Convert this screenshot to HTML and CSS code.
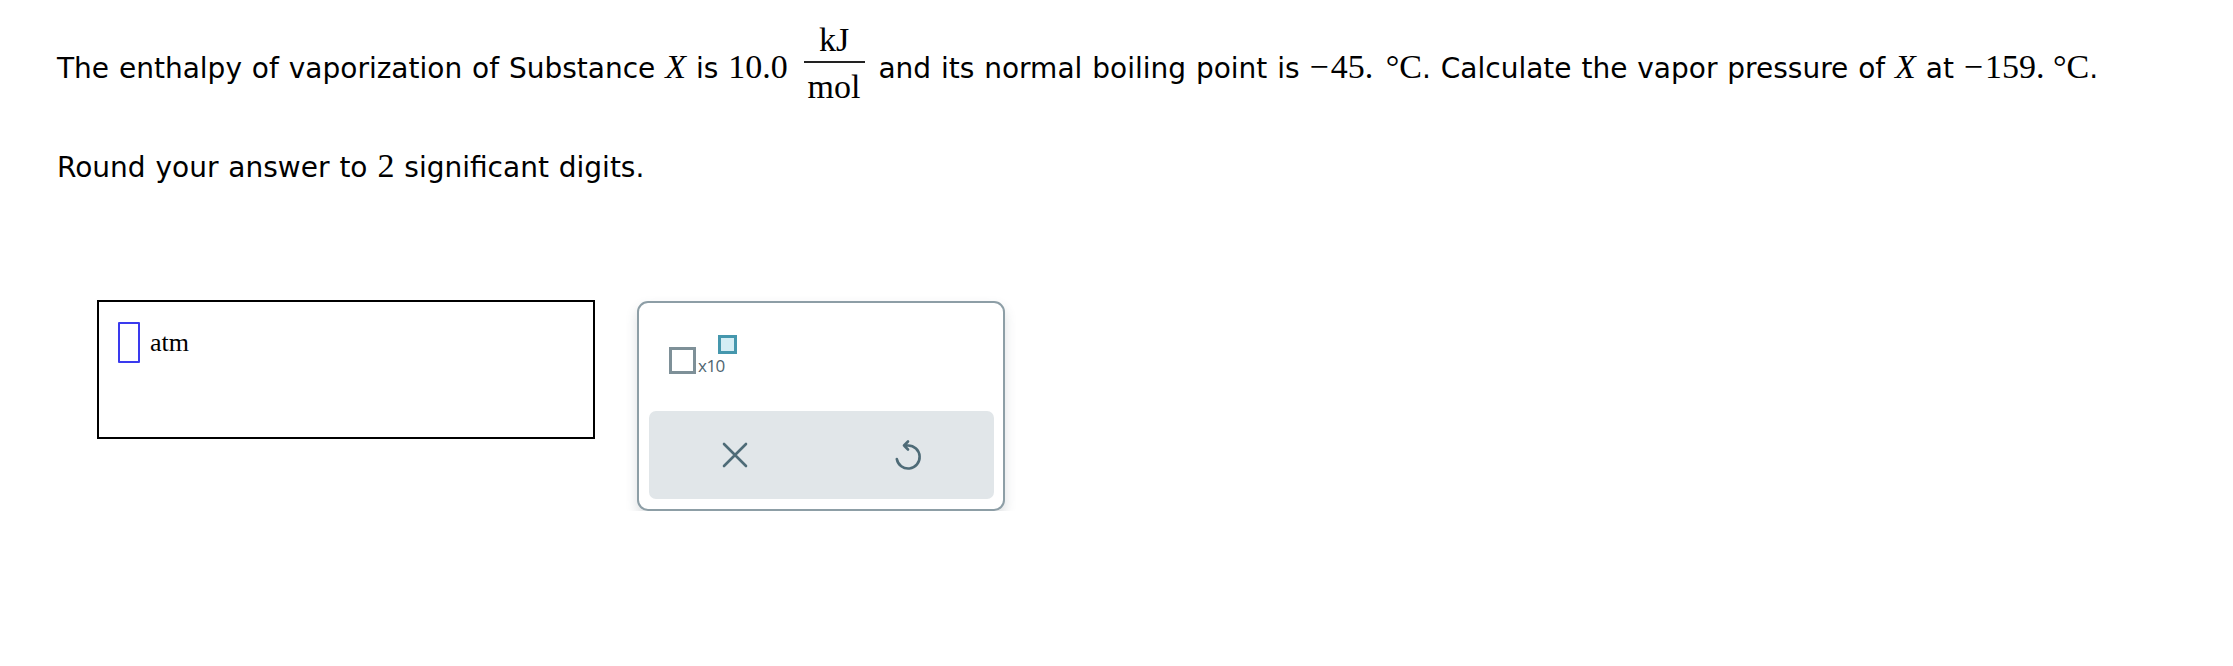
FILE: index.html
```html
<!DOCTYPE html>
<html>
<head>
<meta charset="utf-8">
<link rel="stylesheet" href="styles.css">
</head>
<body>
<div class="page">
  <p class="q1">The enthalpy of vaporization of Substance <span class="m mi">X</span> is <span class="m">10.0</span> <span class="frac"><span class="num">kJ</span><span class="den">mol</span></span> and its normal boiling point is <span class="m"><span class="minus">−</span>45. <span class="unit-c wide">°C</span></span>. Calculate the vapor pressure of <span class="m mi">X</span> at <span class="m"><span class="minus">−</span>159. <span class="unit-c">°C</span></span>.</p>
  <p class="q2">Round your answer to <span class="m">2</span> significant digits.</p>
  <div class="answer-row">
    <div class="answer-box">
      <span class="slot"></span>
      <span class="unit">atm</span>
    </div>
    <div class="palette">
      <div class="palette-top">
        <div class="sci">
          <span class="sci-base"></span>
          <span class="sci-x">x10</span>
          <span class="sci-exp"></span>
        </div>
      </div>
      <div class="palette-actions">
        <div class="action">
          <svg width="26" height="26" viewBox="0 0 26 26"><path d="M2 2 L24 24 M24 2 L2 24" stroke="#4e6b77" stroke-width="2.6" fill="none" stroke-linecap="round"/></svg>
        </div>
        <div class="action">
          <svg width="30" height="32" viewBox="0 0 30 32"><path d="M3.8 20 A11.5 11.5 0 1 0 15 6.5 L11 6.5 M15 2.5 L11 6.5 L15 10.5" stroke="#4e6b77" stroke-width="2.6" fill="none" stroke-linecap="round" stroke-linejoin="round"/></svg>
        </div>
      </div>
    </div>
  </div>
</div>
</body>
</html>
```
FILE: styles.css
```css
html, body {
  margin: 0;
  padding: 0;
  background: #ffffff;
}
.page {
  padding: 0 0 0 57px;
  font-family: "DejaVu Sans", Verdana, sans-serif;
  font-size: 28px;
  word-spacing: 1px;
  color: #000;
}
.q1 {
  margin: 0;
  padding-top: 22px;
  line-height: 40px;
  white-space: nowrap;
}
.m {
  font-family: "Liberation Serif", "Times New Roman", serif;
  font-size: 34px;
  word-spacing: 0;
}
.mi {
  font-style: italic;
}
.minus {
  margin-right: 2px;
}
.unit-c.wide {
  margin-left: 4px;
}
.frac {
  display: inline-flex;
  flex-direction: column;
  align-items: stretch;
  vertical-align: 26.5px;
  font-family: "Liberation Serif", "Times New Roman", serif;
  font-size: 34px;
  line-height: 36px;
  margin: 0 4px 0 6px;
  text-align: center;
}
.num {
  padding: 0 4px 3px;
}
.den {
  border-top: 2px solid #222;
  padding: 6px 4px 0;
}
.q2 {
  margin: 0;
  padding-top: 41px;
  line-height: 40px;
}
.answer-row {
  display: flex;
  align-items: flex-start;
  margin-top: 112px;
  margin-left: 40px;
  gap: 42px;
}
.answer-box {
  box-sizing: border-box;
  width: 498px;
  height: 139px;
  border: 2px solid #000;
  padding: 20px 0 0 19px;
  display: flex;
  align-items: flex-start;
}
.slot {
  box-sizing: border-box;
  width: 22px;
  height: 41px;
  border: 2px solid #3a3aee;
  border-radius: 1px;
}
.unit {
  font-family: "Liberation Serif", "Times New Roman", serif;
  font-size: 26px;
  margin-left: 10px;
  line-height: 30px;
  padding-top: 6px;
}
.palette {
  box-sizing: border-box;
  width: 368px;
  height: 210px;
  margin-top: 1px;
  border: 2px solid #8d9ea6;
  border-radius: 11px;
  background: #fff;
  box-shadow: 0 6px 12px rgba(60, 80, 90, 0.18);
  padding: 0 9px 10px 10px;
  display: flex;
  flex-direction: column;
}
.palette-top {
  height: 108px;
  box-sizing: border-box;
  padding: 32px 0 0 20px;
}
.sci {
  display: flex;
  align-items: flex-start;
  height: 39px;
}
.sci-base {
  box-sizing: border-box;
  width: 27px;
  height: 27px;
  border: 3px solid #7e9098;
  margin-top: 12px;
}
.sci-x {
  font-family: "Open Sans", "DejaVu Sans", sans-serif;
  font-size: 17px;
  color: #4f6570;
  line-height: 16px;
  margin-top: 23px;
  margin-left: 2px;
  letter-spacing: -0.5px;
}
.sci-exp {
  box-sizing: border-box;
  width: 19px;
  height: 19px;
  border: 3px solid #4597ad;
  background: #d4edf4;
  margin-left: -7px;
}
.palette-actions {
  flex: 1;
  background: #e1e6e9;
  border-radius: 7px;
  display: grid;
  grid-template-columns: 1fr 1fr;
}
.action {
  display: flex;
  align-items: center;
  justify-content: center;
}
```
